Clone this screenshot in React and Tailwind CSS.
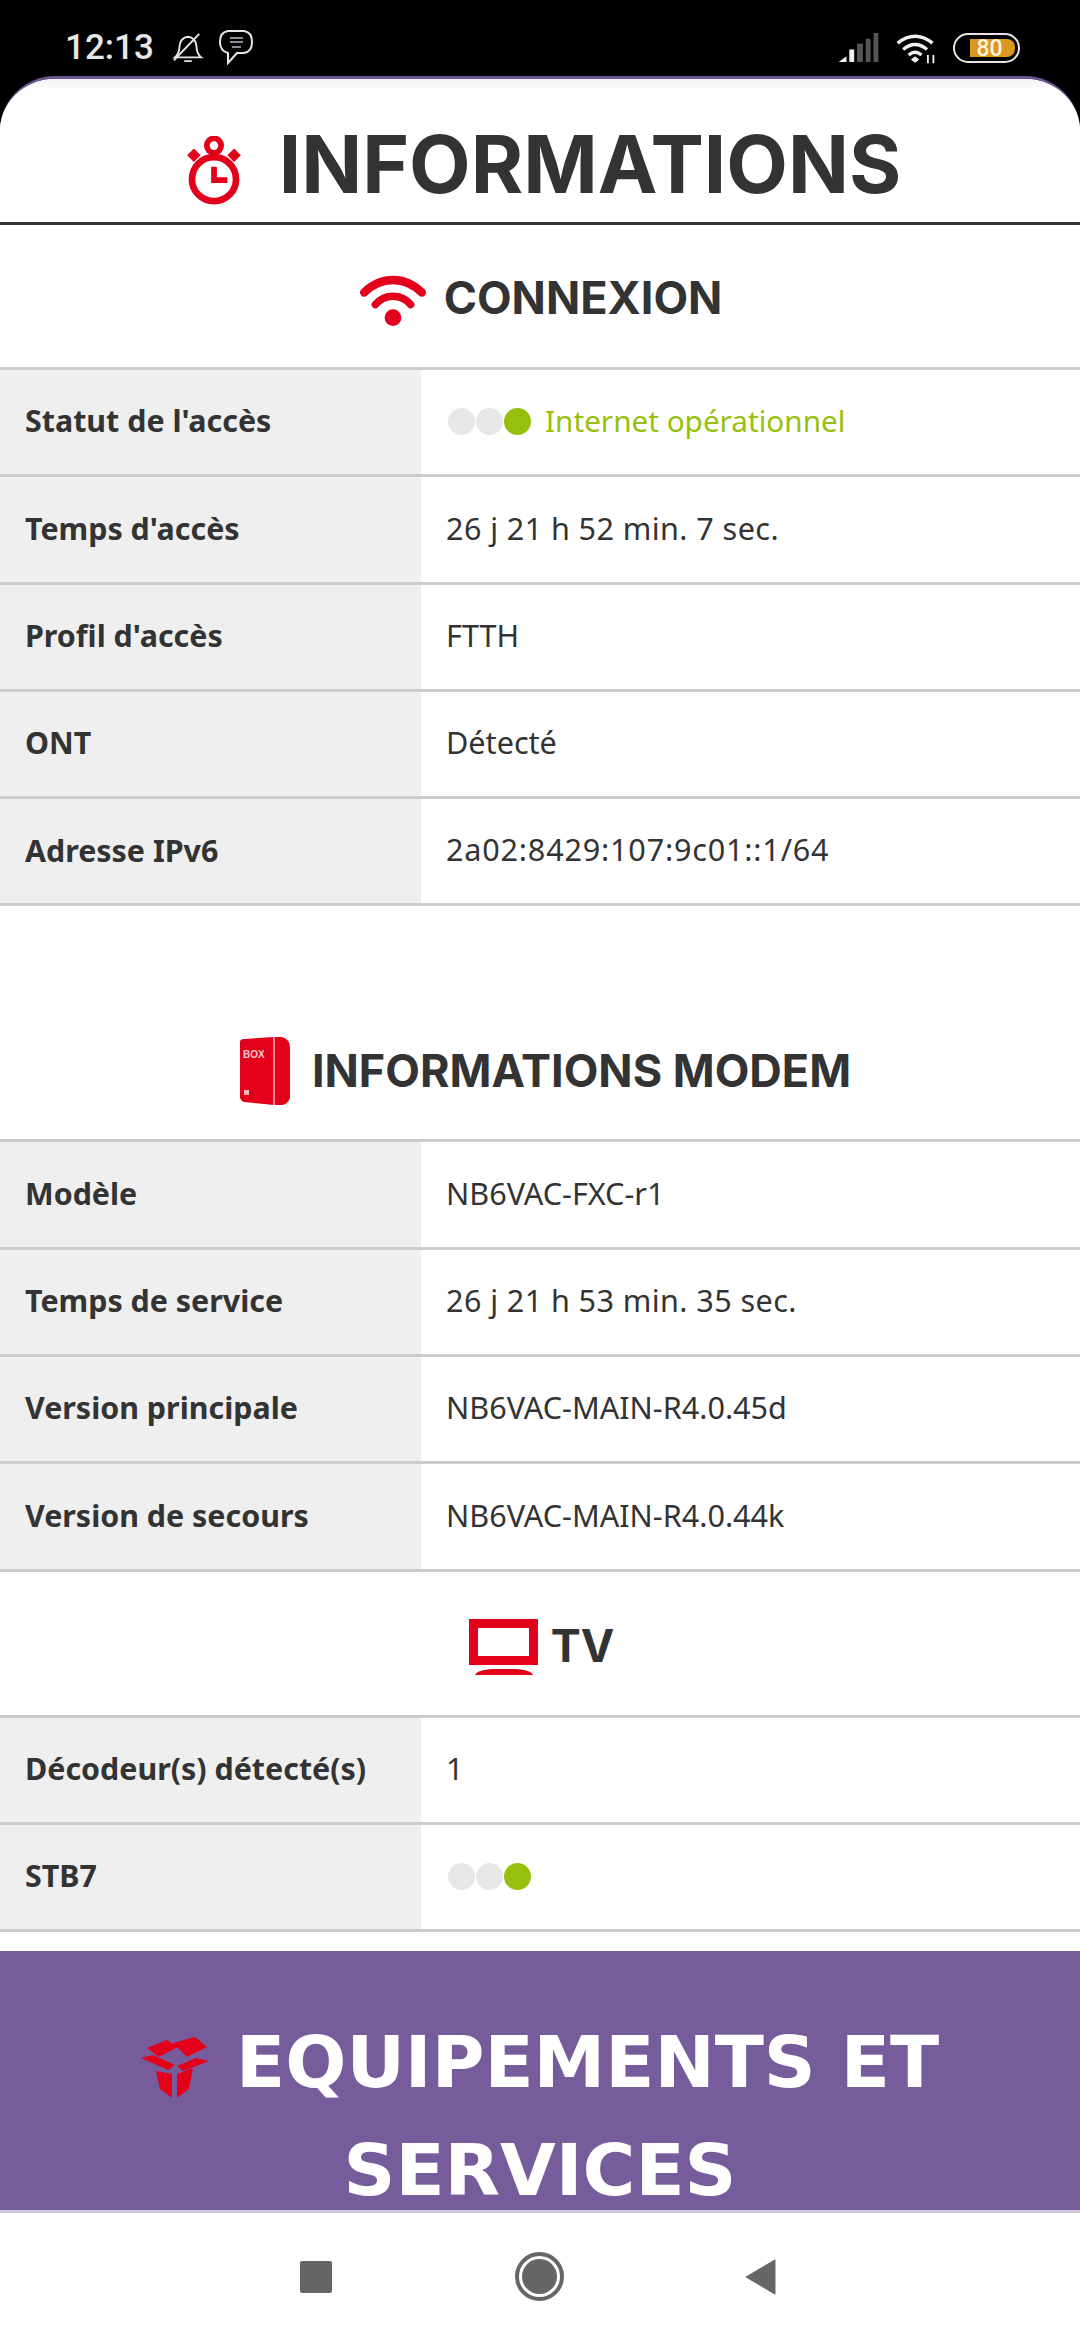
const connexion = [
  ["Statut de l'accès", 'status'],
  ["Temps d'accès", '26 j 21 h 52 min. 7 sec.', 'tracking-[0.4px]'],
  ["Profil d'accès", 'FTTH'],
  ['ONT', 'Détecté'],
  ['Adresse IPv6', '2a02:8429:107:9c01::1/64', 'tracking-[0.8px]'],
];
const modem = [
  ['Modèle', 'NB6VAC-FXC-r1'],
  ['Temps de service', '26 j 21 h 53 min. 35 sec.', 'tracking-[0.4px]'],
  ['Version principale', 'NB6VAC-MAIN-R4.0.45d'],
  ['Version de secours', 'NB6VAC-MAIN-R4.0.44k'],
];
const tv = [
  ['Décodeur(s) détecté(s)', '1'],
  ['STB7', 'dots'],
];

function Dots() {
  return (
    <span className="flex shrink-0 ml-[2px]">
      <span className="w-[27px] h-[27px] rounded-full bg-[#e6e8e7]"></span>
      <span className="w-[27px] h-[27px] rounded-full bg-[#e6e8e7] ml-[1px]"></span>
      <span className="w-[27px] h-[27px] rounded-full bg-[#97bf0d] ml-[1px]"></span>
    </span>
  );
}

function Row({ label, value, extra }) {
  return (
    <div className="flex h-[107.3px] border-b-[3px] border-[#cccccc]">
      <div className="w-[421px] bg-[#efefef] pl-[25px] pb-[2px] flex items-center font-['Noto_Sans'] font-bold text-[30.4px] text-[#333333]">{label}</div>
      <div className={`flex-1 pl-[25px] pb-[2px] flex items-center font-['Noto_Sans'] text-[30.6px] text-[#333333] ${extra || ''}`}>
        {value === 'status' ? (
          <span className="flex items-center gap-[14px] text-[#97bf0d] text-[29.7px]"><Dots />Internet opérationnel</span>
        ) : value === 'dots' ? <Dots /> : value}
      </div>
    </div>
  );
}

function Heading({ icon, text, box }) {
  return (
    <div className={`flex items-center justify-center border-b-[3px] border-[#cccccc] ${box}`}>
      {icon}
      <span className="font-['Inter'] font-bold text-[45px] text-[#333333]">{text}</span>
    </div>
  );
}

function StopwatchIcon() {
  return (
    <svg width="56" height="69" viewBox="0 0 58 72" fill="none" className="shrink-0 mt-[13px]">
      <circle cx="29" cy="10" r="7.5" stroke="#e2001a" strokeWidth="6" />
      <path d="M8 13 L1 20 L8 27 L15 20 Z M50 13 L57 20 L50 27 L43 20 Z" fill="#e2001a" />
      <circle cx="29" cy="45" r="23" stroke="#e2001a" strokeWidth="7" />
      <path d="M29 32 V46 H43" stroke="#e2001a" strokeWidth="6" />
    </svg>
  );
}

function WifiIcon() {
  return (
    <svg width="70" height="53" viewBox="0 0 70 57" fill="none" className="shrink-0 mt-[4px]">
      <path d="M4 21 C22 3 48 3 66 21" stroke="#e2001a" strokeWidth="9" strokeLinecap="round" />
      <path d="M16 34 C26 22 44 22 54 34" stroke="#e2001a" strokeWidth="8" strokeLinecap="round" />
      <circle cx="35" cy="48" r="9" fill="#e2001a" />
    </svg>
  );
}

function BoxIcon() {
  return (
    <svg width="52" height="70" viewBox="0 0 52 70" className="shrink-0 mt-[2px]">
      <path d="M2 6 Q2 3 6 3 L36 1 H44 Q52 3 52 12 V62 Q50 68 44 69 H36 L6 66 Q3 65 2 62 Z" fill="#e2001a" />
      <path d="M36 1 V69" stroke="#f58a96" strokeWidth="2" />
      <text x="5" y="22" fontSize="10" fontWeight="700" fontFamily="Liberation Sans" fill="#f9c9ce">BOX</text>
      <rect x="6" y="54" width="5" height="5" fill="#f5b5bc" />
    </svg>
  );
}

function TvIcon() {
  return (
    <svg width="70" height="57" viewBox="0 0 70 57" className="shrink-0 mt-[4px]">
      <path fillRule="evenodd" d="M0 0 H69 V46 H0 Z M9 9 V37 H60 V9 Z" fill="#e2001a" />
      <path d="M6 56 Q8 51 24 50 H46 Q62 51 64 56 Z" fill="#e2001a" />
    </svg>
  );
}

function ParcelIcon() {
  return (
    <svg width="70" height="62" viewBox="0 0 70 62" className="inline-block align-middle mr-[25px]">
      <path d="M32 6 L54 0 L66 10 L46 20 Z M6 11 L26 3 L37 10 L18 20 Z" fill="#e2001a" />
      <path d="M0 21 L12 18 L34 28 L27 33 Z M68 24 L55 21 L36 29 L42 34 Z" fill="#e2001a" />
      <path d="M15 34 L31 37 V61 L19 52 Z M36 37 L52 31 L48 52 L36 61 Z" fill="#e2001a" />
    </svg>
  );
}

function StatusBar() {
  return (
    <div className="h-[76px] bg-black relative shrink-0 font-['Roboto'] text-[#e6e6e6]">
      <span className="absolute left-[65px] top-[28px] text-[35px] leading-[40px] font-medium">12:13</span>
      <svg width="32" height="32" viewBox="0 0 32 34" fill="none" stroke="#e6e6e6" strokeWidth="2" className="absolute left-[172px] top-[32px]">
        <path d="M2 27 Q7 23 7 15 Q8 6 16 5 Q24 6 25 15 Q25 23 30 27 Z M12 31 H20" />
        <path d="M1 30 L28 2" />
      </svg>
      <svg width="36" height="36" viewBox="0 0 36 36" fill="none" stroke="#e6e6e6" strokeWidth="2" className="absolute left-[218px] top-[29px]">
        <path d="M10 2 H26 Q34 3 34 13 Q34 23 26 24 H19 L10 34 V24 Q2 22 2 13 Q2 3 10 2 Z" />
        <path d="M12 9 H25 M12 13 H25 M14 18 H23" strokeWidth="1.6" stroke="#b9b9c9" />
      </svg>
      <svg width="41" height="29" viewBox="0 0 41 30" className="absolute left-[838px] top-[33px]">
        <path d="M0 30 L8 24 V30 Z" fill="#f0f0f0" />
        <rect x="11" y="17" width="5" height="13" fill="#f0f0f0" />
        <rect x="19" y="11" width="6" height="19" fill="#555555" />
        <rect x="28" y="6" width="5" height="24" fill="#555555" />
        <rect x="36" y="0" width="5" height="30" fill="#555555" />
      </svg>
      <svg width="44" height="33" viewBox="0 0 46 36" fill="none" stroke="#f0f0f0" className="absolute left-[894px] top-[33px]">
        <path d="M3 11 Q22 -4 41 11" strokeWidth="3.6" />
        <path d="M9 18 Q22 7 35 18" strokeWidth="3.6" />
        <path d="M15 24 Q22 18 29 24" strokeWidth="3.6" />
        <path d="M18 29 L22 26 L26 29 L22 32 Z" fill="#f0f0f0" strokeWidth="1" />
        <path d="M36 24 V33 M42 24 V33" strokeWidth="2" />
      </svg>
      <div className="absolute left-[953px] top-[33px] w-[67px] h-[30px] rounded-full border-2 border-[#e6e6e6] flex items-center pl-[15px]">
        <div className="w-[45px] h-[18px] bg-[#dc9723] rounded-r-[8px] flex items-center justify-center text-[#fff3d8] text-[23px] font-medium leading-none pr-[6px]">80</div>
      </div>
    </div>
  );
}

function NavBar() {
  return (
    <div className="h-[127px] shrink-0 bg-white flex items-center">
      <div className="w-[32px] h-[32px] rounded-[2px] bg-[#666666] ml-[300px]"></div>
      <div className="w-[49px] h-[49px] rounded-full border-[4px] border-[#666666] p-[3px] ml-[183px]">
        <div className="w-full h-full rounded-full bg-[#666666]"></div>
      </div>
      <svg width="31" height="36" viewBox="0 0 31 42" preserveAspectRatio="none" className="ml-[181px]">
        <path d="M30 1 V41 L1 21 Z" fill="#666666" stroke="#666666" strokeLinejoin="round" />
      </svg>
    </div>
  );
}

export default function App() {
  return (
    <div className="w-[1080px] h-[2340px] bg-black flex flex-col overflow-hidden">
      <StatusBar />
      <div className="flex-1 min-h-0 bg-white rounded-t-[55px] overflow-hidden border-t-[3px] border-[#6a5590] flex flex-col">
        <div className="h-[146px] shrink-0 border-b-[3px] border-[#333333] flex items-center justify-center gap-[37px] pt-[26px] pl-[7px] bg-[linear-gradient(#f2f1f5,#ffffff_12px)]">
          <StopwatchIcon />
          <span className="font-['Inter'] font-bold text-[80px] text-[#333333] leading-none">INFORMATIONS</span>
        </div>
        <Heading icon={<WifiIcon />} text="CONNEXION" box="h-[145px] gap-[16px] pt-[3px]" />
        {connexion.map(r => <Row key={r[0]} label={r[0]} value={r[1]} extra={r[2]} />)}
        <div className="h-[90px] shrink-0"></div>
        <Heading icon={<BoxIcon />} text="INFORMATIONS MODEM" box="h-[146px] gap-[22px] pt-[5px] pl-[9px]" />
        {modem.map(r => <Row key={r[0]} label={r[0]} value={r[1]} extra={r[2]} />)}
        <Heading icon={<TvIcon />} text="TV" box="h-[146px] gap-[12px] pt-[5px] pl-[3px]" />
        {tv.map(r => <Row key={r[0]} label={r[0]} value={r[1]} />)}
        <div className="h-[19px] shrink-0"></div>
        <div className="flex-1 min-h-0 bg-[#775c9c] overflow-hidden pt-[57px] border-b-[3px] border-[#cfcad8]">
          <div className="font-['DejaVu_Sans'] font-bold text-[72px] leading-[108px] text-white text-center">
            <ParcelIcon />EQUIPEMENTS ET SERVICES
          </div>
        </div>
      </div>
      <NavBar />
    </div>
  );
}
